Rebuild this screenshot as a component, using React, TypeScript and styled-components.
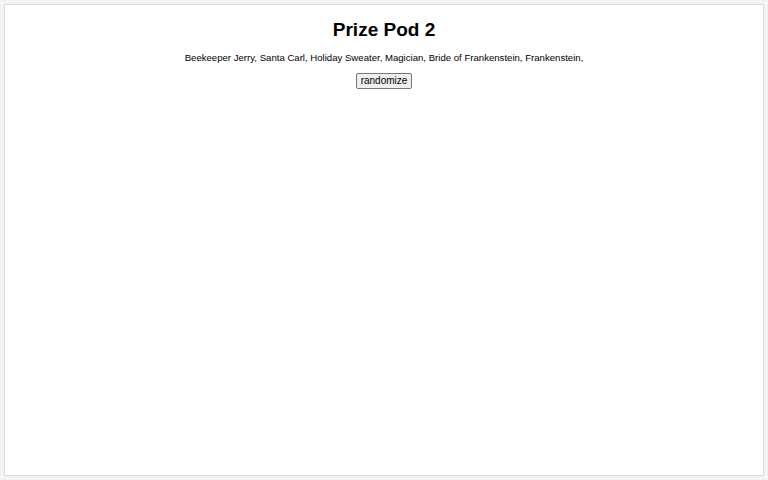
import React from "react";
import styled, { createGlobalStyle } from "styled-components";

const Global = createGlobalStyle`
  html, body { margin: 0; padding: 0; height: 100%; }
  body { background: #f3f3f3; font-family: "Liberation Sans", Arial, sans-serif; }
  #root { height: 100%; }
`;

const Page = styled.div`
  box-sizing: border-box;
  height: 100%;
  padding: 4px;
  display: flex;
`;

const Panel = styled.main`
  flex: 1;
  background: #ffffff;
  border: 1px solid #dcdcdc;
  display: flex;
  flex-direction: column;
  align-items: center;
  padding-top: 14px;
`;

const Title = styled.h1`
  margin: 0;
  font-size: 19px;
  font-weight: bold;
  color: #000;
  line-height: 22px;
`;

const Names = styled.p`
  margin: 11px 0 0;
  font-size: 9.6px;
  line-height: 12px;
  color: #000;
`;

const RandomizeButton = styled.button`
  margin-top: 9px;
  font-family: "Liberation Sans", Arial, sans-serif;
  font-size: 10px;
  line-height: 12px;
  padding: 1px 4px;
  color: #000;
  background: #efefef;
  border: 1px solid #767676;
  border-radius: 2px;
`;

const names = [
  "Beekeeper Jerry",
  "Santa Carl",
  "Holiday Sweater",
  "Magician",
  "Bride of Frankenstein",
  "Frankenstein",
];

export default function App() {
  return (
    <>
      <Global />
      <Page>
        <Panel>
          <Title>Prize Pod 2</Title>
          <Names>{names.map((n) => `${n}, `).join("")}</Names>
          <RandomizeButton>randomize</RandomizeButton>
        </Panel>
      </Page>
    </>
  );
}
